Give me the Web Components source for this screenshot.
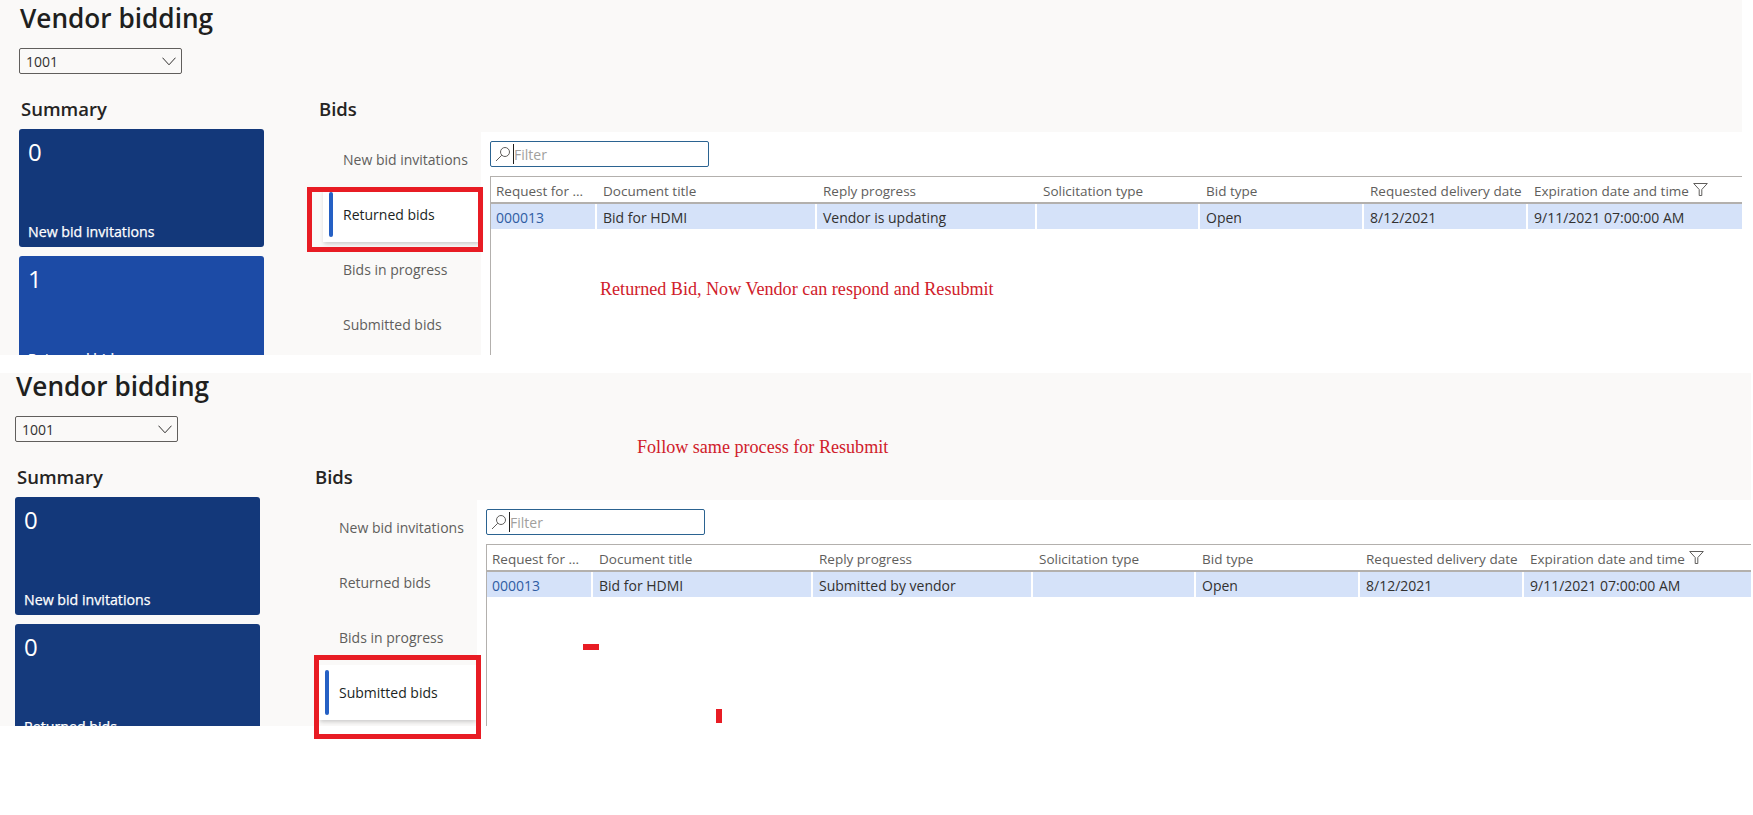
<!DOCTYPE html>
<html lang="en">
<head>
<meta charset="utf-8">
<title>Vendor bidding</title>
<style>
  body { margin: 0; background: #fff; font-family: "Open Sans", "Liberation Sans", sans-serif; }
  main { display: flex; flex-direction: column; gap: 18px; min-height: 815px; }
</style>
</head>
<body>
<main>
  <vendor-panel style="--panel-w: 1742px; --panel-h: 355px;">
    <summary-tile slot="summary" count="0" label="New bid invitations"></summary-tile>
    <summary-tile slot="summary" count="1" label="Returned bids" style="--tile-bg: #1c4ba6;"></summary-tile>
    <bid-nav-item slot="nav">New bid invitations</bid-nav-item>
    <bid-nav-item slot="nav" active>Returned bids</bid-nav-item>
    <bid-nav-item slot="nav">Bids in progress</bid-nav-item>
    <bid-nav-item slot="nav">Submitted bids</bid-nav-item>
    <bid-grid slot="grid" progress="Vendor is updating"></bid-grid>

    <red-box style="left: 307px; top: 187px; width: 176px; height: 65px;"></red-box>
    <red-note style="left: 600px; top: 279px;">Returned Bid, Now Vendor can respond and Resubmit</red-note>
  </vendor-panel>

  <vendor-panel style="--panel-w: 1751px; --panel-h: 353px; --shift-x: -4px; --shift-y: -5px;">
    <summary-tile slot="summary" count="0" label="New bid invitations"></summary-tile>
    <summary-tile slot="summary" count="0" label="Returned bids" style="--tile-bg: #153a7c;"></summary-tile>
    <bid-nav-item slot="nav">New bid invitations</bid-nav-item>
    <bid-nav-item slot="nav">Returned bids</bid-nav-item>
    <bid-nav-item slot="nav">Bids in progress</bid-nav-item>
    <bid-nav-item slot="nav" active>Submitted bids</bid-nav-item>
    <bid-grid slot="grid" progress="Submitted by vendor"></bid-grid>

    <red-box style="left: 314px; top: 282px; width: 167px; height: 84px;"></red-box>
    <red-note style="left: 637px; top: 64px;">Follow same process for Resubmit</red-note>
    <red-mark style="left: 583px; top: 271px; width: 16px; height: 6px;"></red-mark>
    <red-mark style="left: 716px; top: 336px; width: 6px; height: 14px;"></red-mark>
  </vendor-panel>
</main>

<script>
class VendorPanel extends HTMLElement {
    constructor() {
        super();
        const shadow = this.attachShadow({ mode: 'open' });
        shadow.innerHTML = `
            <style>
                :host {
                    display: block;
                    position: relative;
                    width: var(--panel-w, 100%);
                    height: var(--panel-h, 355px);
                }
                .clip {
                    height: 100%;
                    overflow: hidden;
                    background: #faf9f8;
                }
                .content {
                    display: flex;
                    flex-direction: column;
                    margin: var(--shift-y, 0) 0 0 var(--shift-x, 0);
                    padding-left: 19px;
                }
                h1 {
                    margin: 0 0 0 1px;
                    height: 48px;
                    font-size: 26.2px;
                    line-height: 38px;
                    font-weight: 600;
                    color: #201f1e;
                    transform: translateY(-1px);
                }
                .body {
                    display: flex;
                    margin-top: 10px;
                    gap: 55px;
                }
                .summary { width: 245px; flex: none; }
                .bids { flex: 1; min-width: 0; }
                h2 {
                    margin: 0 0 0 2px;
                    height: 45px;
                    padding-top: 13px;
                    box-sizing: border-box;
                    font-size: 18.5px;
                    line-height: 24px;
                    font-weight: 600;
                    color: #252423;
                }
                .bids h2 { margin-left: 0; }
                .tiles { display: flex; flex-direction: column; gap: 9px; }
                .bid-row { display: flex; margin-top: 3px; min-height: 240px; }
                .nav { width: 158px; margin-left: 4px; flex: none; }
                .pane {
                    flex: 1;
                    min-width: 0;
                    background: #fff;
                    padding: 9px 0 0 9px;
                }
            </style>
            <div class="clip">
                <div class="content">
                    <h1>Vendor bidding</h1>
                    <site-select value="1001"></site-select>
                    <div class="body">
                        <section class="summary">
                            <h2>Summary</h2>
                            <div class="tiles"><slot name="summary"></slot></div>
                        </section>
                        <section class="bids">
                            <h2>Bids</h2>
                            <div class="bid-row">
                                <div class="nav"><slot name="nav"></slot></div>
                                <div class="pane">
                                    <filter-box></filter-box>
                                    <slot name="grid"></slot>
                                </div>
                            </div>
                        </section>
                    </div>
                </div>
            </div>
            <slot></slot>
        `;
    }
}

class SiteSelect extends HTMLElement {
    constructor() {
        super();
        const shadow = this.attachShadow({ mode: 'open' });
        shadow.innerHTML = `
            <style>
                :host {
                    display: flex;
                    align-items: center;
                    justify-content: space-between;
                    box-sizing: border-box;
                    width: 163px;
                    height: 26px;
                    padding: 0 5px 0 6px;
                    border: 1px solid #605e5c;
                    border-radius: 2px;
                    font-size: 14px;
                    color: #323130;
                }
            </style>
            <span id="val"></span>
            <svg width="14" height="9" viewBox="0 0 14 9" fill="none" stroke="#323130" stroke-width="1">
                <path d="M0.5 0.7 L7 7.8 L13.5 0.7"/>
            </svg>
        `;
        shadow.getElementById('val').textContent = this.getAttribute('value') || '';
    }
}

class SummaryTile extends HTMLElement {
    constructor() {
        super();
        const shadow = this.attachShadow({ mode: 'open' });
        shadow.innerHTML = `
            <style>
                :host {
                    display: flex;
                    flex-direction: column;
                    justify-content: space-between;
                    box-sizing: border-box;
                    height: 118px;
                    padding: 6px 9px 5px 9px;
                    border-radius: 3px;
                    background: var(--tile-bg, #13387a);
                    color: #fff;
                }
                .count { font-size: 24px; line-height: 34px; }
                .label {
                    font-size: 14.2px;
                    line-height: 20px;
                    -webkit-text-stroke: .25px #fff;
                }
            </style>
            <div class="count"></div>
            <div class="label"></div>
        `;
        shadow.querySelector('.count').textContent = this.getAttribute('count');
        shadow.querySelector('.label').textContent = this.getAttribute('label');
    }
}

class BidNavItem extends HTMLElement {
    constructor() {
        super();
        const shadow = this.attachShadow({ mode: 'open' });
        shadow.innerHTML = `
            <style>
                :host {
                    display: flex;
                    align-items: center;
                    position: relative;
                    box-sizing: border-box;
                    height: 55px;
                    padding-left: 20px;
                    font-size: 14px;
                    color: #605e5c;
                }
                :host([active]) {
                    background: #fff;
                    color: #201f1e;
                    box-shadow: 0 3px 4px -1px rgba(0, 0, 0, .18);
                }
                :host([active])::before {
                    content: "";
                    position: absolute;
                    left: 6px;
                    top: 5px;
                    bottom: 5px;
                    width: 4px;
                    border-radius: 2px;
                    background: #2560c4;
                }
            </style>
            <slot></slot>
        `;
    }
}

class FilterBox extends HTMLElement {
    constructor() {
        super();
        const shadow = this.attachShadow({ mode: 'open' });
        shadow.innerHTML = `
            <style>
                :host {
                    display: flex;
                    align-items: center;
                    box-sizing: border-box;
                    width: 219px;
                    height: 26px;
                    padding-left: 4px;
                    border: 1px solid #2b6391;
                    border-radius: 2px;
                    font-size: 14px;
                    color: #a19f9d;
                }
                svg { flex: none; margin-right: 2px; }
                .caret { width: 1px; height: 20px; background: #201f1e; flex: none; }
                .hint { line-height: 26px; padding-top: 2px; }
            </style>
            <svg width="16" height="16" viewBox="0 0 16 16" fill="none" stroke="#605e5c" stroke-width="1">
                <circle cx="10" cy="6" r="4.5"/>
                <path d="M6.8 9.2 L1 15"/>
            </svg>
            <span class="caret"></span>
            <span class="hint">Filter</span>
        `;
    }
}

class BidGrid extends HTMLElement {
    constructor() {
        super();
        const shadow = this.attachShadow({ mode: 'open' });
        const progress = this.getAttribute('progress') || '';
        shadow.innerHTML = `
            <style>
                :host {
                    display: block;
                    margin-top: 9px;
                    height: 300px;
                    border-left: 1px solid #b3b0ad;
                    border-top: 1px solid #b3b0ad;
                }
                .head, .row {
                    display: grid;
                    grid-template-columns: 106px 220px 220px 163px 164px 164px 1fr;
                    grid-template-rows: 25px;
                }
                .head {
                    border-bottom: 2px solid #b3b0ad;
                    font-size: 13.5px;
                    color: #605e5c;
                }
                .head span {
                    box-sizing: border-box;
                    padding: 2px 0 0 6px;
                    white-space: nowrap;
                    display: flex;
                    align-items: center;
                }
                .head span:first-child { padding-left: 5px; }
                .head svg { margin-left: 4px; margin-top: -2px; }
                .row {
                    font-size: 14px;
                    line-height: 27px;
                    color: #323130;
                }
                .row span {
                    padding-left: 6px;
                    background: #d5e2f9;
                    border-right: 2px solid #fff;
                    white-space: nowrap;
                }
                .row span:last-child { border-right: 0; }
                .row .link { color: #2f5da3; padding-left: 5px; }
            </style>
            <div class="head">
                <span>Request for ...</span>
                <span>Document title</span>
                <span>Reply progress</span>
                <span>Solicitation type</span>
                <span>Bid type</span>
                <span>Requested delivery date</span>
                <span>Expiration date and time
                    <svg width="15" height="13" viewBox="0 0 15 13" fill="none" stroke="#605e5c" stroke-width="1">
                        <path d="M0.7 0.5 H14.3 L8.8 6.5 V12.5 H6.2 V6.5 Z"/>
                    </svg>
                </span>
            </div>
            <div class="row">
                <span class="link">000013</span>
                <span>Bid for HDMI</span>
                <span id="progress"></span>
                <span></span>
                <span>Open</span>
                <span>8/12/2021</span>
                <span>9/11/2021 07:00:00 AM</span>
            </div>
        `;
        shadow.getElementById('progress').textContent = progress;
    }
}

class RedBox extends HTMLElement {
    constructor() {
        super();
        const shadow = this.attachShadow({ mode: 'open' });
        shadow.innerHTML = `
            <style>
                :host {
                    position: absolute;
                    box-sizing: border-box;
                    border: 5px solid #e81c24;
                }
            </style>
        `;
    }
}

class RedMark extends HTMLElement {
    constructor() {
        super();
        const shadow = this.attachShadow({ mode: 'open' });
        shadow.innerHTML = `
            <style>
                :host { position: absolute; background: #e81c24; }
            </style>
        `;
    }
}

class RedNote extends HTMLElement {
    constructor() {
        super();
        const shadow = this.attachShadow({ mode: 'open' });
        shadow.innerHTML = `
            <style>
                :host {
                    position: absolute;
                    font-family: "Liberation Serif", serif;
                    font-size: 18.1px;
                    line-height: 20px;
                    color: #d0202a;
                    white-space: nowrap;
                }
            </style>
            <slot></slot>
        `;
    }
}

customElements.define('site-select', SiteSelect);
customElements.define('summary-tile', SummaryTile);
customElements.define('bid-nav-item', BidNavItem);
customElements.define('filter-box', FilterBox);
customElements.define('bid-grid', BidGrid);
customElements.define('red-box', RedBox);
customElements.define('red-mark', RedMark);
customElements.define('red-note', RedNote);
customElements.define('vendor-panel', VendorPanel);
</script>
</body>
</html>
